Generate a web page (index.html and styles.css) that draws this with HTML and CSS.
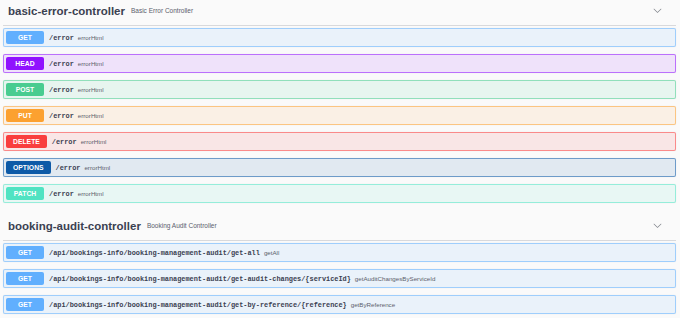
FILE: index.html
```html
<!DOCTYPE html>
<html>
  <head>
    <title>Swagger UI</title>
    <link rel="stylesheet" href="styles.css">
  </head>
  <body>
    <div class="swagger">

      <section class="tag-section">
        <h4 class="tag">
          <span class="tag-name">basic-error-controller</span>
          <small class="tag-desc">Basic Error Controller</small>
          <svg class="arrow" viewBox="0 0 20 20"><path d="M17.418 6.109c.272-.268.709-.268.979 0s.271.701 0 .969l-7.908 7.83c-.27.268-.707.268-.979 0l-7.908-7.83c-.27-.268-.27-.701 0-.969.271-.268.709-.268.979 0L10 13.25l7.418-7.141z"/></svg>
        </h4>
        <div class="ops">
          <div class="op op-get"><span class="method">GET</span><span class="path">/error</span><span class="summary">errorHtml</span></div>
          <div class="op op-head"><span class="method">HEAD</span><span class="path">/error</span><span class="summary">errorHtml</span></div>
          <div class="op op-post"><span class="method">POST</span><span class="path">/error</span><span class="summary">errorHtml</span></div>
          <div class="op op-put"><span class="method">PUT</span><span class="path">/error</span><span class="summary">errorHtml</span></div>
          <div class="op op-delete"><span class="method">DELETE</span><span class="path">/error</span><span class="summary">errorHtml</span></div>
          <div class="op op-options"><span class="method">OPTIONS</span><span class="path">/error</span><span class="summary">errorHtml</span></div>
          <div class="op op-patch"><span class="method">PATCH</span><span class="path">/error</span><span class="summary">errorHtml</span></div>
        </div>
      </section>

      <section class="tag-section">
        <h4 class="tag">
          <span class="tag-name">booking-audit-controller</span>
          <small class="tag-desc">Booking Audit Controller</small>
          <svg class="arrow" viewBox="0 0 20 20"><path d="M17.418 6.109c.272-.268.709-.268.979 0s.271.701 0 .969l-7.908 7.83c-.27.268-.707.268-.979 0l-7.908-7.83c-.27-.268-.27-.701 0-.969.271-.268.709-.268.979 0L10 13.25l7.418-7.141z"/></svg>
        </h4>
        <div class="ops">
          <div class="op op-get"><span class="method">GET</span><span class="path">/api/bookings-info/booking-management-audit/get-all</span><span class="summary">getAll</span></div>
          <div class="op op-get"><span class="method">GET</span><span class="path">/api/bookings-info/booking-management-audit/get-audit-changes/{serviceId}</span><span class="summary">getAuditChangesByServiceId</span></div>
          <div class="op op-get"><span class="method">GET</span><span class="path">/api/bookings-info/booking-management-audit/get-by-reference/{reference}</span><span class="summary">getByReference</span></div>
        </div>
      </section>

    </div>
  </body>
</html>
```

FILE: styles.css
```css
body {
  margin: 0;
  background-color: #fafafa;
  color: #3b4151;
  font-family: "Liberation Sans", Arial, sans-serif;
}

.swagger {
  padding: 0 4px 0 3px;
}

.tag-section + .tag-section {
  margin-top: 12px;
}

.tag {
  margin: 0;
  height: 26px;
  box-sizing: border-box;
  display: flex;
  align-items: center;
  padding: 0 14px 4px 5px;
  border-bottom: 1px solid rgba(59, 65, 81, .18);
}

.tag-name {
  font-size: 11.5px;
  font-weight: bold;
}

.tag-desc {
  font-size: 6.5px;
  font-weight: normal;
  margin-left: 6px;
  color: #5b606c;
}

.arrow {
  margin-left: auto;
  width: 9px;
  height: 9px;
  fill: #7d8088;
}

.ops {
  padding-top: 2px;
}

.op {
  display: flex;
  align-items: center;
  height: 19px;
  box-sizing: border-box;
  padding: 0 2px;
  margin-bottom: 7px;
  border: 1px solid;
  border-radius: 2px;
  box-shadow: 0 0 1px rgba(0, 0, 0, .12);
}

.method {
  display: flex;
  align-items: center;
  justify-content: center;
  height: 13px;
  min-width: 38px;
  box-sizing: border-box;
  padding: 0 7px;
  margin-right: 5px;
  border-radius: 2px;
  color: #fff;
  font-size: 6.8px;
  font-weight: bold;
}

.path {
  font-family: "Liberation Mono", monospace;
  font-weight: bold;
  font-size: 6.9px;
  margin-right: 4px;
}

.summary {
  font-size: 6.2px;
  color: #5b606c;
}

.op-get {
  background-color: rgba(97, 175, 254, .1);
  border-color: rgba(97, 175, 254, .55);
}
.op-get .method {
  background-color: #61affe;
}

.op-head {
  background-color: rgba(144, 18, 254, .1);
  border-color: rgba(144, 18, 254, .55);
}
.op-head .method {
  background-color: #9012fe;
}

.op-post {
  background-color: rgba(73, 204, 144, .1);
  border-color: rgba(73, 204, 144, .55);
}
.op-post .method {
  background-color: #49cc90;
}

.op-put {
  background-color: rgba(252, 161, 48, .1);
  border-color: rgba(252, 161, 48, .55);
}
.op-put .method {
  background-color: #fca130;
}

.op-delete {
  background-color: rgba(249, 62, 62, .1);
  border-color: rgba(249, 62, 62, .55);
}
.op-delete .method {
  background-color: #f93e3e;
}

.op-options {
  background-color: rgba(13, 90, 167, .1);
  border-color: rgba(13, 90, 167, .55);
}
.op-options .method {
  background-color: #0d5aa7;
}

.op-patch {
  background-color: rgba(80, 227, 194, .1);
  border-color: rgba(80, 227, 194, .55);
}
.op-patch .method {
  background-color: #50e3c2;
}
```
